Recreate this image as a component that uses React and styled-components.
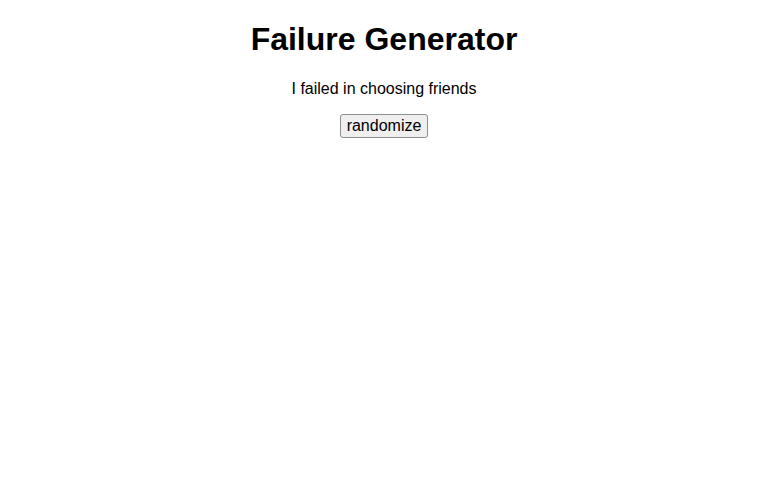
import React, { useState } from 'react'
import styled, { createGlobalStyle } from 'styled-components'

const failures = [
  'I failed in choosing friends',
  'I failed my driving test',
  'I failed to wake up on time',
  'I failed at baking bread',
]

const GlobalStyle = createGlobalStyle`
  body {
    margin: 0;
    background: #fff;
    color: #000;
    font-family: "Liberation Sans", Arial, sans-serif;
  }
`

const Page = styled.div`
  text-align: center;
  padding: 0 8px;
`

const Title = styled.h1`
  font-size: 32px;
  font-weight: bold;
  margin: 21px 0 22px;
`

const Line = styled.p`
  font-size: 16px;
  margin: 16px 0;
`

const Button = styled.button`
  font-family: "Liberation Sans", Arial, sans-serif;
  font-size: 16px;
  line-height: 19px;
  color: #000;
  background: #efefef;
  border: 1px solid #8f8f8f;
  border-radius: 3px;
  padding: 1px 6px 2px;
  cursor: pointer;

  &:hover {
    background: #e5e5e5;
  }
`

const App = () => {
  const [index, setIndex] = useState(0)

  const randomize = () => {
    setIndex(Math.floor(Math.random() * failures.length))
  }

  return (
    <Page>
      <GlobalStyle />
      <Title>Failure Generator</Title>
      <Line>{failures[index]}</Line>
      <Button onClick={randomize}>randomize</Button>
    </Page>
  )
}

export default App
